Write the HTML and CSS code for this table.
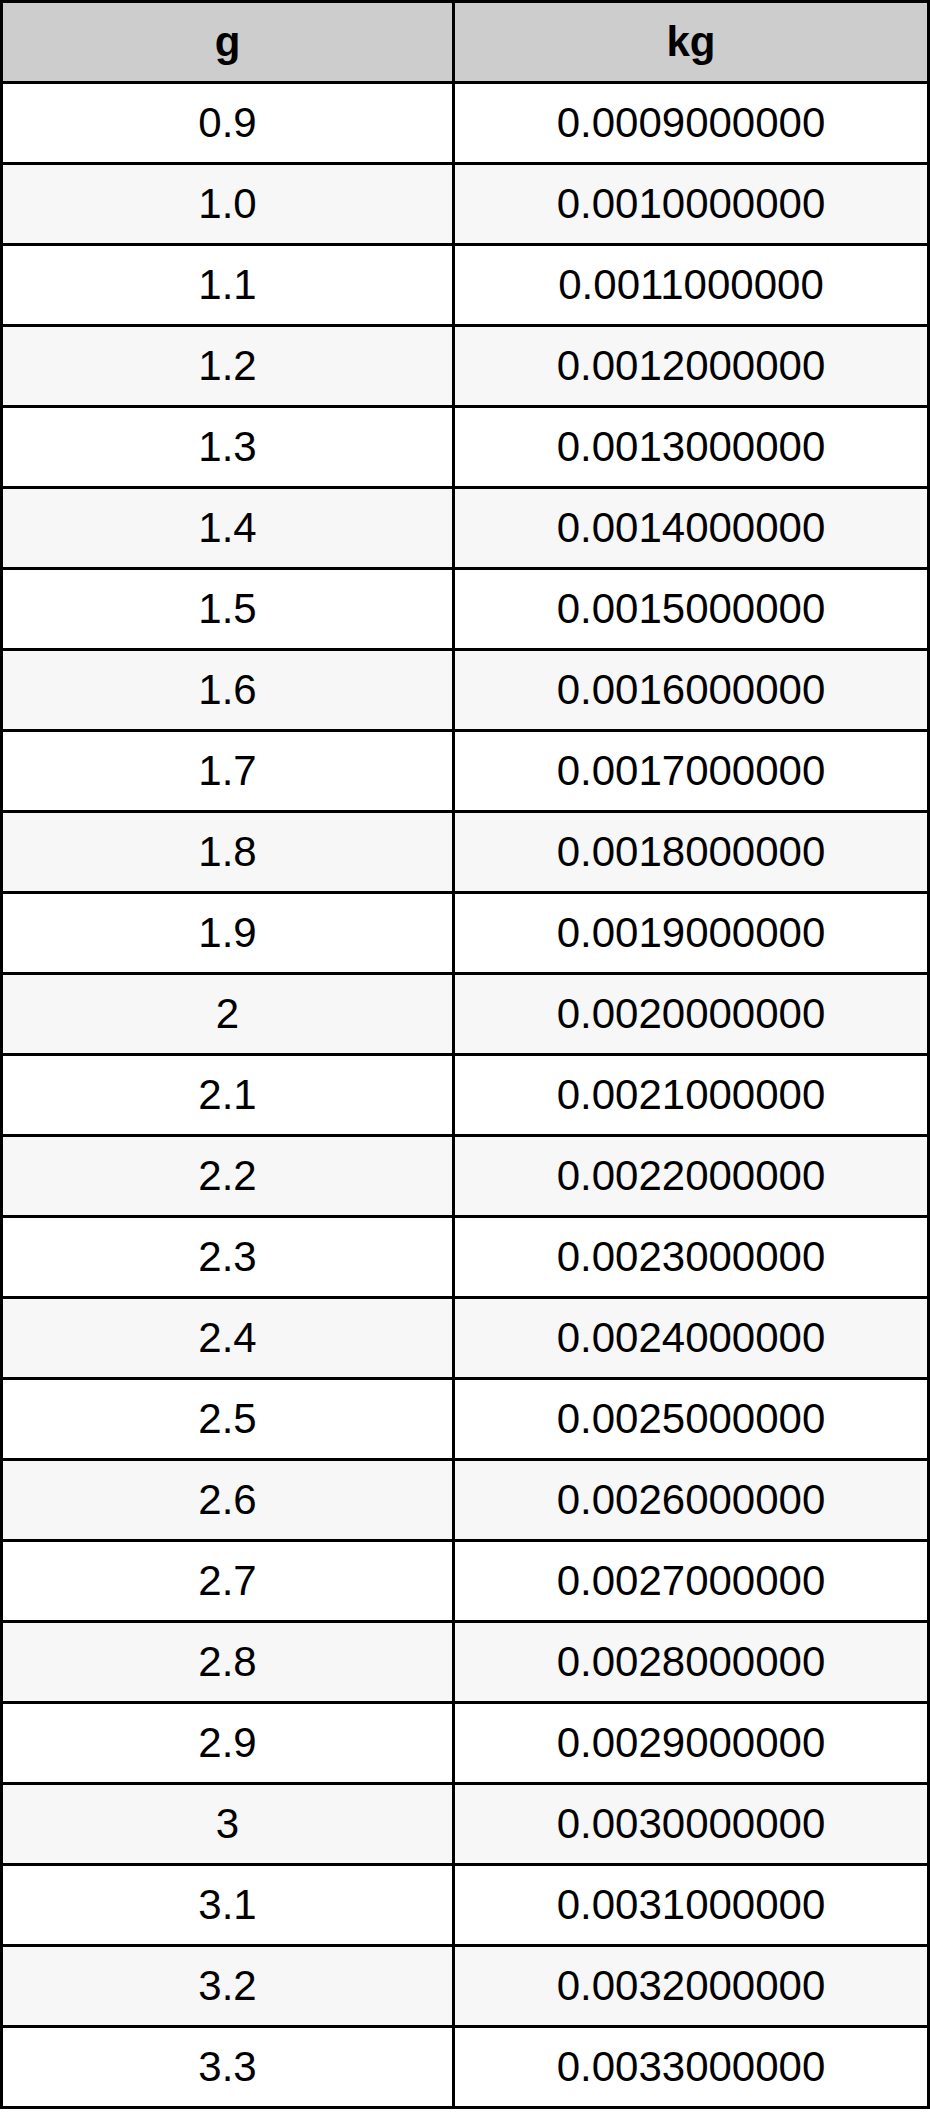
FILE: index.html
```html
<!DOCTYPE html>
<html lang="en">
<head>
<meta charset="utf-8">
<title>g to kg</title>
<link rel="stylesheet" href="styles.css">
</head>
<body>
<table class="conv">
<colgroup><col class="c1"><col class="c2"></colgroup>
<thead>
<tr><th>g</th><th>kg</th></tr>
</thead>
<tbody>
<tr><td>0.9</td><td>0.0009000000</td></tr>
<tr><td>1.0</td><td>0.0010000000</td></tr>
<tr><td>1.1</td><td>0.0011000000</td></tr>
<tr><td>1.2</td><td>0.0012000000</td></tr>
<tr><td>1.3</td><td>0.0013000000</td></tr>
<tr><td>1.4</td><td>0.0014000000</td></tr>
<tr><td>1.5</td><td>0.0015000000</td></tr>
<tr><td>1.6</td><td>0.0016000000</td></tr>
<tr><td>1.7</td><td>0.0017000000</td></tr>
<tr><td>1.8</td><td>0.0018000000</td></tr>
<tr><td>1.9</td><td>0.0019000000</td></tr>
<tr><td>2</td><td>0.0020000000</td></tr>
<tr><td>2.1</td><td>0.0021000000</td></tr>
<tr><td>2.2</td><td>0.0022000000</td></tr>
<tr><td>2.3</td><td>0.0023000000</td></tr>
<tr><td>2.4</td><td>0.0024000000</td></tr>
<tr><td>2.5</td><td>0.0025000000</td></tr>
<tr><td>2.6</td><td>0.0026000000</td></tr>
<tr><td>2.7</td><td>0.0027000000</td></tr>
<tr><td>2.8</td><td>0.0028000000</td></tr>
<tr><td>2.9</td><td>0.0029000000</td></tr>
<tr><td>3</td><td>0.0030000000</td></tr>
<tr><td>3.1</td><td>0.0031000000</td></tr>
<tr><td>3.2</td><td>0.0032000000</td></tr>
<tr><td>3.3</td><td>0.0033000000</td></tr>
</tbody>
</table>
</body>
</html>
```

FILE: styles.css
```css
html, body {
  margin: 0;
  padding: 0;
  background: #ffffff;
}

.conv {
  border-collapse: collapse;
  table-layout: fixed;
  width: 930px;
  font-family: "Liberation Sans", Arial, sans-serif;
  font-size: 42px;
  color: #000000;
}

.conv .c1 { width: 452px; }
.conv .c2 { width: 475px; }

.conv th,
.conv td {
  border: 3px solid #000000;
  padding: 0;
  height: 78px;
  line-height: 76px;
  text-align: center;
  white-space: nowrap;
}

.conv th {
  background: #cdcdcd;
  font-weight: bold;
}

.conv tbody tr:nth-child(odd) td { background: #ffffff; }
.conv tbody tr:nth-child(even) td { background: #f7f7f7; }
```
